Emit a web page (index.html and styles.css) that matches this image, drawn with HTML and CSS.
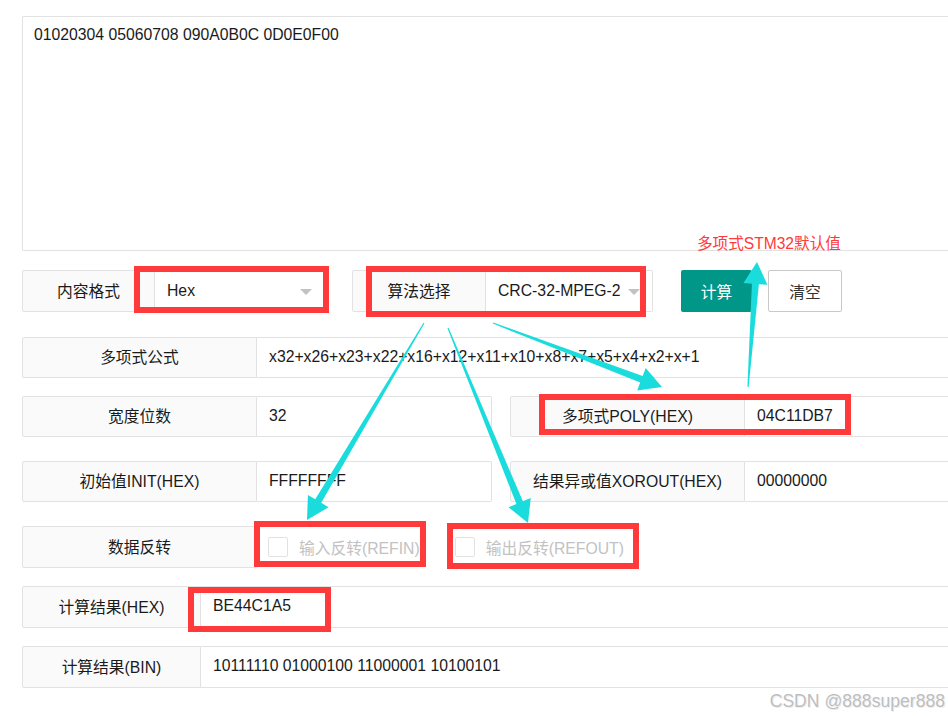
FILE: index.html
```html
<!DOCTYPE html>
<html lang="zh-CN">
<head>
<meta charset="utf-8">
<title>CRC</title>
<link rel="stylesheet" href="styles.css">
</head>
<body>
<div class="page">
  <div class="textarea">01020304 05060708 090A0B0C 0D0E0F00</div>

  <div class="row row1">
    <div class="group">
      <div class="label w133">内容格式</div>
      <div class="select w170"><span>Hex</span><i class="caret"></i></div>
    </div>
    <div class="group g2">
      <div class="label w134">算法选择</div>
      <div class="select w167"><span>CRC-32-MPEG-2</span><i class="caret"></i></div>
    </div>
    <button class="btn btn-primary">计算</button>
    <button class="btn btn-plain">清空</button>
  </div>

  <div class="row row2">
    <div class="label w235">多项式公式</div>
    <div class="value grow">x32+x26+x23+x22+x16+x12+x11+x10+x8+x7+x5+x4+x2+x+1</div>
  </div>

  <div class="row row3">
    <div class="label w235">宽度位数</div>
    <div class="value w235">32</div>
    <div class="label w235 ml18">多项式POLY(HEX)</div>
    <div class="value grow">04C11DB7</div>
  </div>

  <div class="row row4">
    <div class="label w235">初始值INIT(HEX)</div>
    <div class="value w235">FFFFFFFF</div>
    <div class="label w235 ml18">结果异或值XOROUT(HEX)</div>
    <div class="value grow">00000000</div>
  </div>

  <div class="row row5">
    <div class="label w235">数据反转</div>
    <div class="checks">
      <span class="check"><i class="box"></i><span class="ctext">输入反转(REFIN)</span></span>
      <span class="check c2"><i class="box"></i><span class="ctext">输出反转(REFOUT)</span></span>
    </div>
  </div>

  <div class="row row6">
    <div class="label w179">计算结果(HEX)</div>
    <div class="value grow">BE44C1A5</div>
  </div>

  <div class="row row7">
    <div class="label w179">计算结果(BIN)</div>
    <div class="value grow">10111110 01000100 11000001 10100101</div>
  </div>
</div>

<div class="note">多项式STM32默认值</div>
<div class="watermark">CSDN @888super888</div>

<svg class="overlay" width="948" height="716" viewBox="0 0 948 716" xmlns="http://www.w3.org/2000/svg">
  <g class="redbox">
    <rect x="137" y="269" width="189" height="41"/>
    <rect x="369" y="269" width="274" height="45"/>
    <rect x="542" y="397" width="306" height="35"/>
    <rect x="257" y="524" width="166" height="40"/>
    <rect x="450" y="526" width="186" height="40"/>
    <rect x="191" y="590" width="137" height="39"/>
  </g>
  <g class="arrow">
    <polygon points="423.48,322.69 315.23,499.29 307.92,494.95 307,520 328.56,507.21 321.25,502.87 424.52,323.31"/>
    <polygon points="447.45,328.23 516.41,503.98 508.55,507.20 528,523 530.75,498.09 522.89,501.32 448.55,327.77"/>
    <polygon points="492.79,323.56 640.19,382.48 637.18,390.43 662,387 645.68,367.99 642.67,375.94 493.21,322.44"/>
    <polygon points="748.60,387.04 758.91,284.19 767.39,284.80 757,262 743.45,283.08 751.93,283.69 747.40,386.96"/>
  </g>
</svg>
</body>
</html>
```

FILE: styles.css
```css
html, body {
  margin: 0;
  padding: 0;
  overflow: hidden;
  background: #fff;
}
body {
  width: 948px;
  height: 716px;
  position: relative;
  font-family: "Liberation Sans", "Noto Sans CJK SC", sans-serif;
  font-size: 15.75px;
  color: #1a1a1a;
}
.page {
  padding: 16px 0 0 22px;
  width: 926px;
}
.textarea {
  box-sizing: border-box;
  height: 235px;
  border: 1px solid #e2e2e2;
  border-right: none;
  border-radius: 2px 0 0 2px;
  padding: 7px 11px;
  line-height: 22px;
}
.row {
  display: flex;
  align-items: stretch;
  height: 41px;
}
.row1 { margin-top: 19px; height: 42px; }
.row2 { margin-top: 25px; }
.row3 { margin-top: 18px; }
.row4 { margin-top: 24px; }
.row5 { margin-top: 24px; height: 42px; }
.row6 { margin-top: 18px; height: 42px; }
.row7 { margin-top: 18px; height: 42px; }

.group { display: flex; align-items: stretch; }
.g2 { margin-left: 27px; }

.label {
  box-sizing: border-box;
  background: #fafafa;
  border: 1px solid #e2e2e2;
  border-radius: 2px 0 0 2px;
  display: flex;
  align-items: center;
  justify-content: center;
  white-space: nowrap;
  padding-bottom: 2px;
}
.value, .select {
  box-sizing: border-box;
  border: 1px solid #e2e2e2;
  border-left: none;
  border-radius: 0 2px 2px 0;
  display: flex;
  align-items: center;
  padding-left: 12px;
  white-space: nowrap;
  background: #fff;
}
.value { padding-bottom: 2px; }
.value.grow {
  border-right: none;
  border-radius: 0;
}
.select {
  justify-content: space-between;
  padding-right: 12px;
}
.caret {
  width: 0;
  height: 0;
  border-top: 6px solid #c2c2c2;
  border-left: 6px solid transparent;
  border-right: 6px solid transparent;
  margin-top: 1px;
}
.w133 { width: 133px; }
.w134 { width: 134px; }
.w170 { width: 170px; }
.w167 { width: 167px; }
.w235 { width: 235px; }
.w179 { width: 179px; }
.grow { flex: 1; min-width: 0; overflow: hidden; }
.ml18 { margin-left: 18px; }

.btn {
  box-sizing: border-box;
  height: 42px;
  border-radius: 2px;
  font-family: inherit;
  font-size: 15.75px;
  padding: 0;
  cursor: pointer;
}
.btn-primary {
  width: 71px;
  margin-left: 28px;
  background: #009688;
  color: #fff;
  border: none;
}
.btn-plain {
  width: 74px;
  margin-left: 16px;
  background: #fff;
  color: #333;
  border: 1px solid #c9c9c9;
}

.checks {
  display: flex;
  align-items: center;
  padding-left: 11px;
}
.check {
  display: flex;
  align-items: center;
  color: #c2c2c2;
}
.check.c2 { margin-left: 35px; }
.box {
  box-sizing: border-box;
  width: 20px;
  height: 20px;
  border: 1px solid #e2e2e2;
  border-radius: 2px;
  background: #fff;
  margin-right: 11px;
}

.note {
  position: absolute;
  left: 697px;
  top: 234px;
  font-size: 15.6px;
  color: #ff3a3a;
  line-height: 20px;
  white-space: nowrap;
}
.watermark {
  position: absolute;
  right: 3px;
  top: 690px;
  font-size: 17.6px;
  line-height: 22px;
  color: #bdbdbd;
  text-shadow: 0 0 1px #fff, 1px 1px 0 #eee;
  white-space: nowrap;
}
.overlay {
  position: absolute;
  left: 0;
  top: 0;
  pointer-events: none;
}
.redbox rect {
  fill: none;
  stroke: #ff3a3a;
  stroke-width: 6;
}
.arrow polygon {
  fill: #1bdcdc;
}
```
